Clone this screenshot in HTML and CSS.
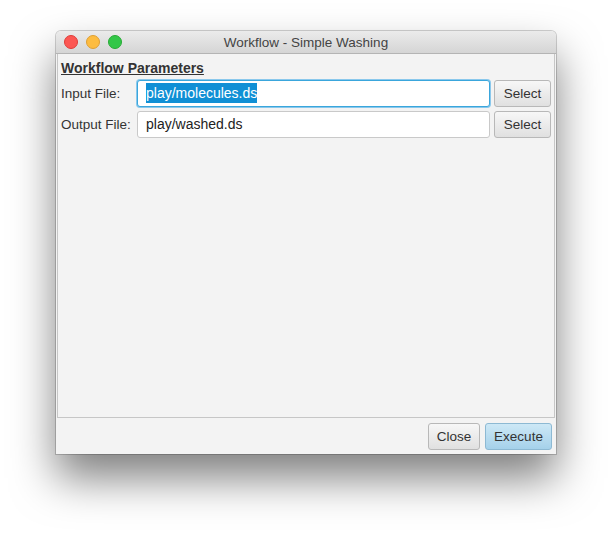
FILE: index.html
```html
<!DOCTYPE html>
<html lang="en">
<head>
    <meta charset="UTF-8">
    <title>Workflow - Simple Washing</title>
    <link rel="stylesheet" href="styles.css">
</head>
<body>
    <div class="window">
        <div class="titlebar">
            <div class="lights">
                <span class="light red"></span>
                <span class="light yellow"></span>
                <span class="light green"></span>
            </div>
            <div class="title">Workflow - Simple Washing</div>
        </div>
        <div class="panel">
            <div class="heading">Workflow Parameters</div>
            <div class="params">
                <div class="label">Input File:</div>
                <div class="field focused"><span class="selected">play/molecules.ds</span></div>
                <button class="btn">Select</button>

                <div class="label">Output File:</div>
                <div class="field">play/washed.ds</div>
                <button class="btn">Select</button>
            </div>
        </div>
        <div class="footer">
            <button class="btn close">Close</button>
            <button class="btn primary">Execute</button>
        </div>
    </div>
</body>
</html>
```
FILE: styles.css
```css
html {
    height: 100%;
}
body {
    margin: 0;
    min-height: 100%;
    box-sizing: border-box;
    padding: 31px 0 0 56px;
    background: #ffffff;
    font-family: "Liberation Sans", Arial, sans-serif;
    font-size: 13.5px;
    color: #333;
}
.window {
    width: 500px;
    height: 423px;
    display: flex;
    flex-direction: column;
    background: #f3f3f3;
    border-radius: 5px 5px 0 0;
    box-shadow: 0 0 0 1px rgba(0, 0, 0, 0.18), 0 24px 44px rgba(0, 0, 0, 0.5);
}
.titlebar {
    height: 22px;
    display: flex;
    align-items: center;
    position: relative;
    background: linear-gradient(#ebebeb, #d5d5d5);
    border-bottom: 1px solid #b4b4b4;
    border-radius: 5px 5px 0 0;
}
.lights {
    display: flex;
    gap: 8px;
    padding-left: 8px;
}
.light {
    width: 12px;
    height: 12px;
    border-radius: 50%;
}
.red { background: #fc5753; border: 0.5px solid #df3d39; }
.yellow { background: #fdbc40; border: 0.5px solid #de9f34; }
.green { background: #33c748; border: 0.5px solid #27aa35; }
.title {
    position: absolute;
    left: 0;
    right: 0;
    text-align: center;
    color: #444;
}
.panel {
    flex: 1;
    margin: 0 1px;
    padding: 6px 3px 0 3px;
    border: 1px solid #c6c6c6;
    border-top: none;
}
.heading {
    font-weight: bold;
    font-size: 14px;
    text-decoration: underline;
    height: 20px;
    line-height: 16px;
}
.params {
    display: grid;
    grid-template-columns: 72px 353px 57px;
    column-gap: 4px;
    row-gap: 4px;
    align-items: center;
}
.field {
    height: 25px;
    line-height: 25px;
    padding: 0 8px;
    background: #fff;
    border: 1px solid #c9c9c9;
    border-radius: 3px;
    font-size: 14px;
    color: #222;
}
.field.focused {
    border: 1px solid #3aa6dc;
    box-shadow: 0 0 0 1px #8ac8ec;
}
.selected {
    background: #0f8fd5;
    color: #fff;
    padding: 2px 0;
}
.btn {
    height: 27px;
    padding: 0;
    font-family: "Liberation Sans", Arial, sans-serif;
    font-size: 13.5px;
    color: #333;
    background: linear-gradient(#f7f7f7, #e0e0e0);
    border: 1px solid #b8b8b8;
    border-radius: 3px;
}
.params .btn {
    width: 57px;
}
.footer {
    height: 36px;
    display: flex;
    justify-content: flex-end;
    align-items: center;
    gap: 5px;
    padding-right: 4px;
}
.close {
    width: 52px;
}
.primary {
    width: 67px;
    background: linear-gradient(#cde8f6, #a5d1ea);
    border-color: #8db9d3;
}
```
